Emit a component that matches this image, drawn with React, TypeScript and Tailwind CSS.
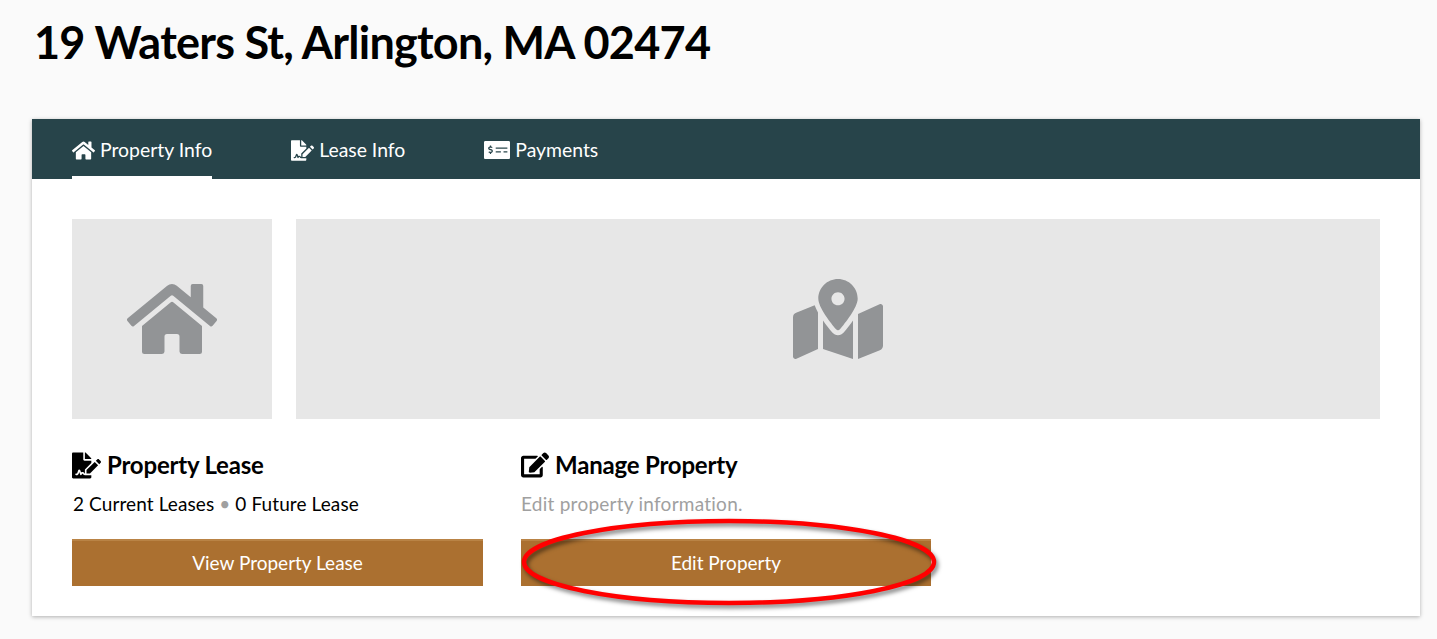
import { FaHome, FaFileSignature, FaMoneyCheckAlt, FaMapMarkedAlt, FaEdit } from 'react-icons/fa';

function Tab({ icon, label, active }: { icon: React.ReactNode; label: string; active?: boolean }) {
  return (
    <div className={`flex h-full items-center gap-[5px] border-b-[3px] pt-[5px] text-[19.4px] text-white ${active ? 'border-white' : 'border-transparent'}`}>
      {icon}
      <span>{label}</span>
    </div>
  );
}

export default function App() {
  return (
    <div className="min-h-[639px] bg-[#fafafa] pl-[32px] pr-[17px] font-['Lato','Noto_Sans',sans-serif] text-black">
      <h1 className="flex h-[119px] items-start pl-[2px] pt-[13px] text-[45px] leading-[58px] font-bold tracking-[-0.75px]">
        19 Waters St, Arlington, MA 02474
      </h1>

      <div className="h-[497px] bg-white shadow-[0_1px_4px_rgba(0,0,0,0.3)]">
        <div className="flex h-[60px] items-center gap-[79px] bg-[#27444a] px-[40px]">
          <Tab active icon={<FaHome className="text-[23px]" />} label="Property Info" />
          <Tab icon={<FaFileSignature className="text-[23px]" />} label="Lease Info" />
          <Tab icon={<FaMoneyCheckAlt className="text-[26px]" />} label="Payments" />
        </div>

        <div className="px-[40px] pt-[40px]">
          <div className="flex gap-[24px]">
            <div className="flex h-[200px] w-[200px] items-center justify-center bg-[#e7e7e7]">
              <FaHome className="text-[90px] text-[#929496]" />
            </div>
            <div className="flex h-[200px] w-[1084px] items-center justify-center bg-[#e7e7e7]">
              <FaMapMarkedAlt className="text-[90px] text-[#929496]" />
            </div>
          </div>

          <div className="mt-[30px] flex gap-[38px]">
            <div className="w-[411px]">
              <div className="flex h-[32px] items-center gap-[6px] text-[24px] font-bold tracking-[-0.2px]">
                <FaFileSignature className="text-[29px]" />
                <span>Property Lease</span>
              </div>
              <p className="mt-[9px] h-[28px] pl-[1px] text-[19px] leading-[28px] tracking-[0.1px]">
                2 Current Leases <span className="text-[#a0a0a0]">•</span> 0 Future Lease
              </p>
              <button className="mt-[21px] h-[47px] w-full border-t-2 border-[#b98345] bg-[#ab7030] text-[19px] text-white">
                View Property Lease
              </button>
            </div>

            <div className="relative w-[410px]">
              <div className="flex h-[32px] items-center gap-[6px] text-[24px] font-bold tracking-[-0.2px]">
                <FaEdit className="text-[28px]" />
                <span>Manage Property</span>
              </div>
              <p className="mt-[9px] h-[28px] text-[19px] leading-[28px] tracking-[0.25px] text-[#a0a0a0]">Edit property information.</p>
              <button className="mt-[21px] h-[47px] w-full border-t-2 border-[#b98345] bg-[#ab7030] text-[19px] text-white">
                Edit Property
              </button>
              {/* annotation ring drawn over the button */}
              <svg className="absolute left-[-2px] top-[65px] overflow-visible drop-shadow-[2px_3px_2px_rgba(0,0,0,0.5)]" width="420" height="90" viewBox="0 0 420 90" fill="none">
                <ellipse cx="210" cy="48" rx="205" ry="41" stroke="#ff0000" strokeWidth="4.5" />
              </svg>
            </div>
          </div>
        </div>
      </div>
    </div>
  );
}
